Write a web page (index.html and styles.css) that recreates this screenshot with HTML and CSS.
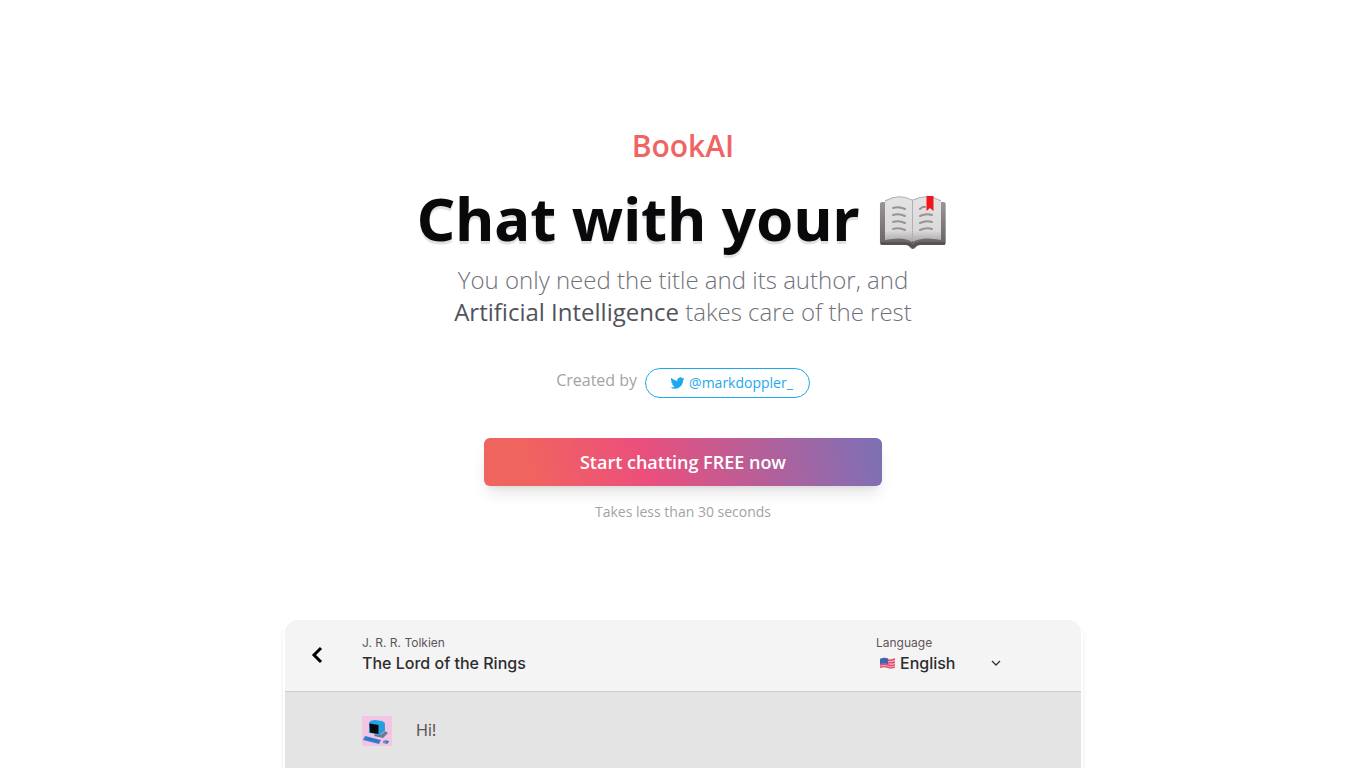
FILE: index.html
```html
<!DOCTYPE html>
<html lang="en">
<head>
<meta charset="utf-8">
<meta name="viewport" content="width=device-width, initial-scale=1">
<title>BookAI</title>
<link rel="stylesheet" href="styles.css">
</head>
<body>
<main class="page">
  <section class="hero">
    <p class="brand">BookAI</p>
    <h1 class="headline">
      <span>Chat with your</span>
      <svg class="book" viewBox="0 0 70 54" role="img" aria-label="book">
        <defs>
          <linearGradient id="cover" x1="0" y1="0" x2="0" y2="1"><stop offset="0" stop-color="#9a9598"/><stop offset="1" stop-color="#655d62"/></linearGradient>
          <linearGradient id="leaf" x1="0" y1="0" x2="0" y2="1"><stop offset="0" stop-color="#e4e4e4"/><stop offset=".75" stop-color="#dadada"/><stop offset="1" stop-color="#aaa5a8"/></linearGradient>
        </defs>
        <path d="M1 8Q1 6 3 6H61Q63 6 63 8V47Q63 49 61 49H39Q36 49 35 51Q32 55 29 51Q28 49 25 49H3Q1 49 1 47Z" transform="translate(-.1)scale(1.06 1)" fill="url(#cover)"/>
        <path d="M6 4Q20-3 33 4V46Q25 40 6 44Z" fill="url(#leaf)"/>
        <path d="M62 4Q48-3 34 4V46Q43 40 62 44Z" fill="url(#leaf)"/>
        <path d="M6 5Q20-3 33 4H34Q48-3 62 5" fill="none" stroke="#b0acae"/>
        <path d="M33 4H34V45H33Z" fill="#b4b0b2"/>
        <path d="M2 47.500H27Q31 47.500 34 50.500Q37 47.500 41 47.500H66" fill="none" stroke="#554e53" stroke-width="2.400"/>
        <g fill="none" stroke="#989295" stroke-width="2" stroke-linecap="round">
          <path d="M14 12Q20 10 26 13M14 19Q20 17 26 20M14 26Q20 24 26 27M14 33Q20 31 26 34M41 13Q44 10 46 11M41 20Q47 17 53 19M41 27Q47 24 53 26M41 34Q47 31 53 33"/>
        </g>
        <path d="M47.500 0H54.500V15L51 12L47.500 15Z" fill="#f5131f"/>
      </svg>
    </h1>
    <p class="pitch">You only need the title and its author, and <strong>Artificial Intelligence</strong> takes care of the rest</p>
    <div class="credit">
      <span class="credit-label">Created by</span>
      <a class="handle" href="#">
        <svg class="bird" viewBox="0 0 24 24" aria-hidden="true"><path fill="currentColor" d="M23.95 4.57a10 10 0 0 1-2.82.77 4.96 4.96 0 0 0 2.16-2.72c-.95.55-2 .96-3.13 1.18a4.92 4.92 0 0 0-8.38 4.48C7.69 8.1 4.07 6.13 1.64 3.16a4.92 4.92 0 0 0 1.52 6.57 4.9 4.9 0 0 1-2.23-.61v.06c0 2.38 1.7 4.37 3.95 4.83a5 5 0 0 1-2.21.08 4.94 4.94 0 0 0 4.6 3.42A9.87 9.87 0 0 1 0 19.54a14 14 0 0 0 7.55 2.21c9.05 0 14-7.5 14-13.98 0-.21 0-.42-.02-.63a9.9 9.9 0 0 0 2.42-2.57z"/></svg>
        <span class="handle-name">@markdoppler_</span>
      </a>
    </div>
    <button class="start" type="button">Start chatting FREE now</button>
    <p class="note">Takes less than 30 seconds</p>
  </section>

  <section class="chat">
    <header class="chat-bar">
      <button class="back" type="button" aria-label="Back">
        <svg viewBox="0 0 12 18" aria-hidden="true"><path d="M10 2L3 9L10 16" fill="none" stroke="#000" stroke-width="3"/></svg>
      </button>
      <div class="title">
        <p class="small">J. R. R. Tolkien</p>
        <h2 class="book-name">The Lord of the Rings</h2>
      </div>
      <div class="language">
        <label class="small" for="language">Language</label>
        <div class="picker">
          <svg class="flag" viewBox="0 0 15 12" aria-hidden="true">
            <path d="M0 2Q4 0 8 1.500T15 1V10Q11 12 7 10.500T0 11Z" fill="#f3b4a8"/>
            <path d="M0 8Q4 6.500 8 8T15 7.500M0 10.300Q4 9 8 10.300T15 10M7 3Q11 4 15 2M7 5.500Q11 6.500 15 5" fill="none" stroke="#e04878" stroke-width="1.400"/>
            <path d="M0 2Q4 0 8 1.500V7Q4 6 0 7Z" fill="#3e66b0"/>
          </svg>
          <select id="language" class="select"><option>English</option></select>
          <svg class="chevron" viewBox="0 0 10 6" aria-hidden="true"><path d="M1 1L5 5L9 1" fill="none" stroke="#333" stroke-width="1.300"/></svg>
        </div>
      </div>
    </header>
    <div class="message">
      <svg class="avatar" viewBox="0 0 30 30" role="img" aria-label="Computer">
        <rect width="30" height="30" rx="1" fill="#f4c5e3"/>
        <path d="M13 18L19 19L23 15L26 17L21 22L12 20Z" fill="#657b98"/>
        <path d="M7 7Q8 4 13 4L20 5Q23 6 23 8V14L18 19L8 17Q6 17 7 15Z" fill="#20a6e8"/>
        <path d="M17 9L22 7L23 14L18 19L17 18Z" fill="#2c9bdc"/>
        <path d="M7.500 7.500L16.500 9V18L8 16.500Z" fill="#080a10"/>
        <path d="M3 20L19 24L17 28L1 24Z" fill="#2e83d6"/>
        <path d="M4 22L17 25.500" stroke="#3d639f" stroke-width=".8"/>
        <path d="M21 25L24 24L27 25L25 28L21 27Z" fill="#5790c9"/>
        <path d="M24.500 25.500L27 25L25 28" fill="#565665"/>
      </svg>
      <p class="bubble">Hi!</p>
    </div>
  </section>
</main>
</body>
</html>
```
FILE: styles.css
```css
* { box-sizing: border-box; }
body {
  margin: 0;
  background: #fff;
  font-family: "Open Sans", "Noto Sans", sans-serif;
  color: #09090b;
}
p, h1, h2 { margin: 0; }
svg { display: block; flex: none; }
.page {
  display: flex;
  flex-direction: column;
  align-items: center;
  min-height: 100vh;
  padding-top: 124px;
}
.hero {
  display: flex;
  flex-direction: column;
  align-items: center;
  width: 100%;
  padding: 0 16px;
  text-align: center;
}
.brand {
  font-size: 30px;
  line-height: 44px;
  font-weight: 600;
  color: #f06464;
}
.headline {
  display: flex;
  flex-wrap: wrap;
  align-items: center;
  justify-content: center;
  gap: 20px;
  margin-top: 20px;
  font-family: "Noto Sans", sans-serif;
  font-size: 60px;
  line-height: 60px;
  font-weight: 700;
  text-shadow: 0 3px 1px rgba(0, 0, 0, .12);
}
.book {
  width: 70px;
  height: 62px;
  margin-bottom: -2px;
  padding-top: 8px;
}
.pitch {
  max-width: 480px;
  margin-top: 16px;
  font-size: 24px;
  line-height: 32px;
  font-weight: 300;
  color: #71717a;
}
.pitch strong { font-weight: 400; color: #52525b; }
.credit {
  display: flex;
  gap: 8px;
  margin-top: 40px;
}
.credit-label { font-size: 16px; line-height: 24px; color: #a3a3a3; }
.handle {
  display: flex;
  align-items: center;
  gap: 4px;
  height: 30px;
  padding: 0 16px 0 24px;
  border: 1px solid #1da9ec;
  border-radius: 15px;
  font-size: 14px;
  color: #1da9ec;
  text-decoration: none;
}
.handle-name { padding-bottom: 2px; }
.bird { width: 15px; height: 14px; }
.start {
  width: 398px;
  max-width: 100%;
  height: 48px;
  margin-top: 40px;
  border: 0;
  border-radius: 6px;
  background: linear-gradient(75deg, #f0645f 12%, #ec4f7c 40%, #8a6cb0 92%, #7a70b3);
  box-shadow: 0 10px 15px -3px rgba(0, 0, 0, .1), 0 4px 6px -4px rgba(0, 0, 0, .1);
  font: 600 18px/28px "Open Sans", sans-serif;
  color: #fff;
}
.note { margin-top: 16px; font-size: 14px; line-height: 20px; color: #a3a3a3; }
.chat {
  display: flex;
  flex: 1;
  flex-direction: column;
  width: 100%;
  max-width: 800px;
  margin-top: 96px;
  border: 2px solid #fff;
  border-bottom: 0;
  border-radius: 16px 16px 0 0;
  box-shadow: 0 4px 4px rgba(0, 0, 0, .08);
  background: #e4e4e4;
  overflow: hidden;
  font-family: Inter, sans-serif;
}
.chat-bar {
  display: flex;
  align-items: center;
  height: 72px;
  padding: 0 77px 2px 26px;
  border-bottom: 1px solid #ccc;
  background: #f4f4f4;
}
.back {
  width: 12px;
  height: 18px;
  padding: 0;
  border: 0;
  background: none;
}
.title { flex: 1; padding-left: 39px; }
.small {
  display: block;
  font-size: 12px;
  line-height: 16px;
  color: #5c5558;
}
.book-name {
  font-size: 16px;
  line-height: 24px;
  font-weight: 500;
  color: #2d2d2d;
}
.language { width: 128px; }
.picker {
  display: flex;
  align-items: center;
  height: 24px;
  padding: 0 3px 0 4px;
}
.flag { width: 15px; height: 12px; }
.select {
  flex: 1;
  height: 24px;
  margin-left: 5px;
  padding: 0;
  border: 0;
  appearance: none;
  background: none;
  font: 500 16px/24px Inter, sans-serif;
  color: #2d2d2d;
}
.chevron { width: 10px; height: 6px; }
.message { display: flex; align-items: center; gap: 24px; padding: 24px 77px; }
.avatar { width: 30px; height: 30px; }
.bubble { padding-bottom: 2px; font-size: 16px; line-height: 24px; color: #5c5558; }
```
